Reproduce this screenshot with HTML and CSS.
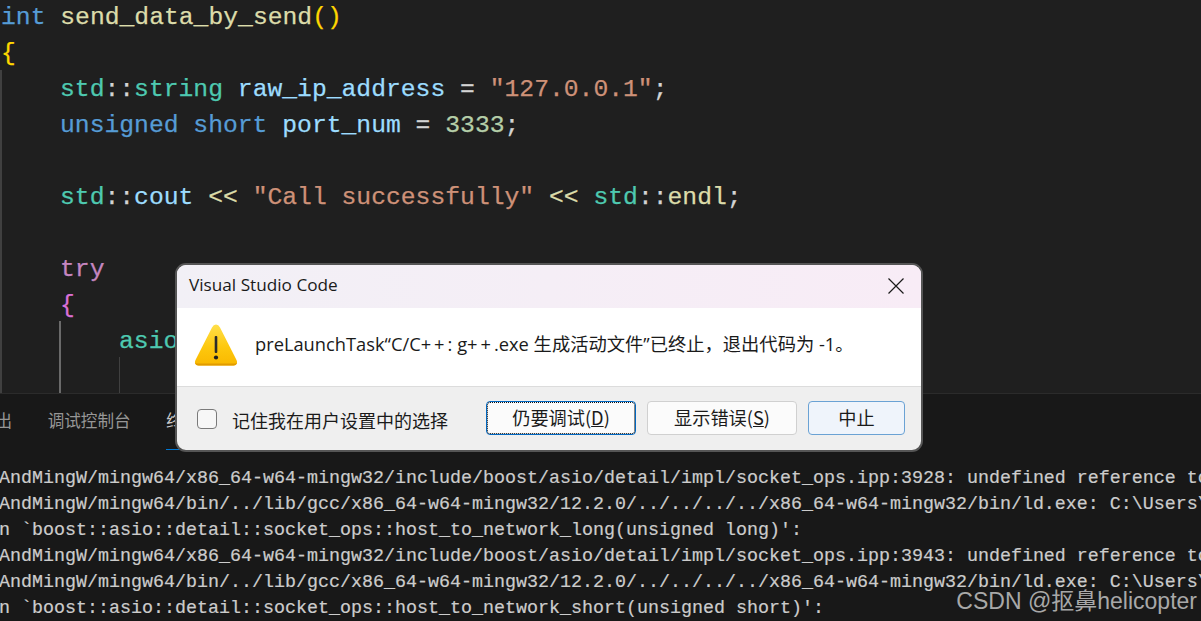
FILE: index.html
```html
<!DOCTYPE html>
<html lang="zh-CN">
<head>
<meta charset="utf-8">
<title>Visual Studio Code</title>
<link rel="stylesheet" href="styles.css">
</head>
<body>
<main class="window">
  <section class="editor">
    <div class="line"><span class="kw">int</span> <span class="fn">send_data_by_send</span><span class="br">()</span></div>
    <div class="line"><span class="br">{</span></div>
    <div class="line in1"><span class="ty">std</span><span class="pl">::</span><span class="ty">string</span> <span class="var">raw_ip_address</span> <span class="pl">=</span> <span class="str">"127.0.0.1"</span><span class="pl">;</span></div>
    <div class="line in1"><span class="kw">unsigned short</span> <span class="var">port_num</span> <span class="pl">=</span> <span class="num">3333</span><span class="pl">;</span></div>
    <div class="line"></div>
    <div class="line in1"><span class="ty">std</span><span class="pl">::</span><span class="var">cout</span> <span class="fn">&lt;&lt;</span> <span class="str">"Call successfully"</span> <span class="fn">&lt;&lt;</span> <span class="ty">std</span><span class="pl">::</span><span class="fn">endl</span><span class="pl">;</span></div>
    <div class="line"></div>
    <div class="line in1"><span class="ctl">try</span></div>
    <div class="line in1"><span class="br2">{</span></div>
    <div class="line in2"><span class="ty">asio</span></div>
    <span class="guide g1"></span>
    <span class="guide g2"></span>
    <span class="guide g3"></span>
  </section>
  <section class="panel">
    <nav class="tabs">
      <span class="tab">输出</span>
      <span class="tab">调试控制台</span>
      <span class="tab active">终端</span>
    </nav>
    <pre class="term">AndMingW/mingw64/x86_64-w64-mingw32/include/boost/asio/detail/impl/socket_ops.ipp:3928: undefined reference to
AndMingW/mingw64/bin/../lib/gcc/x86_64-w64-mingw32/12.2.0/../../../../x86_64-w64-mingw32/bin/ld.exe: C:\Users\
n `boost::asio::detail::socket_ops::host_to_network_long(unsigned long)':
AndMingW/mingw64/x86_64-w64-mingw32/include/boost/asio/detail/impl/socket_ops.ipp:3943: undefined reference to
AndMingW/mingw64/bin/../lib/gcc/x86_64-w64-mingw32/12.2.0/../../../../x86_64-w64-mingw32/bin/ld.exe: C:\Users\
n `boost::asio::detail::socket_ops::host_to_network_short(unsigned short)':</pre>
  </section>
</main>

<div class="dialog" role="dialog">
  <header class="titlebar">
    <span class="title">Visual Studio Code</span>
    <svg class="close" width="16" height="16" viewBox="0 0 16 16"><path d="M0.5 0.5L15.5 15.5M15.5 0.5L0.5 15.5" stroke="#1a1a1a" stroke-width="1.2" fill="none"/></svg>
  </header>
  <div class="body">
    <svg class="warn" width="44" height="44" viewBox="0 0 44 44">
      <defs><linearGradient id="wg" x1="0" y1="0" x2="0" y2="1"><stop offset="0" stop-color="#ffdf4a"/><stop offset="0.55" stop-color="#fdc80e"/><stop offset="1" stop-color="#f9b800"/></linearGradient></defs>
      <path d="M22 1.5 Q24.5 1.5 26 4.5 L42.5 37 Q44.5 42 39.5 42.5 L4.5 42.5 Q-0.5 42 1.5 37 L18 4.5 Q19.5 1.5 22 1.5Z" fill="url(#wg)"/>
      <path d="M1 40 Q2 42.5 4.5 42.5 L39.5 42.5 Q42 42.5 43 40 Q41 40.6 39 40.6 L5 40.6 Q3 40.6 1 40Z" fill="#e19b00"/>
      <rect x="20.7" y="13" width="2.6" height="17" rx="1" fill="#2b2b2b"/>
      <circle cx="22" cy="34.5" r="2.1" fill="#1f1f1f"/>
    </svg>
    <p class="msg">preLaunchTask“C/C<span class="wide">++</span>: g<span class="wide">++</span>.exe 生成活动文件”已终止，退出代码为 -1。</p>
  </div>
  <footer class="foot">
    <label class="remember"><span class="check"></span><span class="remember-text">记住我在用户设置中的选择</span></label>
    <div class="btns">
      <button class="btn focus">仍要调试(<u>D</u>)</button>
      <button class="btn">显示错误(<u>S</u>)</button>
      <button class="btn hot">中止</button>
    </div>
  </footer>
</div>

<div class="mark">CSDN @抠鼻helicopter</div>
</body>
</html>
```
FILE: styles.css
```css
* { box-sizing: border-box; }
html, body { margin: 0; height: 100%; overflow: hidden; background: #1e1e1e; }
.window { width: 1201px; height: 621px; display: flex; flex-direction: column; overflow: hidden; }
.editor { position: relative; flex: none; height: 393px; background: #1f1f1f; overflow: hidden;
  font-family: "Liberation Mono", monospace; font-size: 24.7px; -webkit-text-stroke: 0.25px; }
.line { height: 36px; line-height: 36px; white-space: pre; padding-left: 1px; }
.line:first-child { margin-top: -1px; }
.in1 { padding-left: 60px; }
.in2 { padding-left: 119px; }
.kw { color: #569cd6; }
.fn { color: #dcdcaa; }
.br { color: #ffd700; }
.br2 { color: #da70d6; }
.ty { color: #4ec9b0; }
.pl { color: #d4d4d4; }
.var { color: #9cdcfe; }
.str { color: #ce9178; }
.num { color: #b5cea8; }
.ctl { color: #c586c0; }
.guide { position: absolute; background: #404040; }
.g1 { left: 0; top: 70px; width: 2px; height: 323px; }
.g2 { left: 59px; top: 321px; width: 2px; height: 72px; background: #6a6a6a; }
.g3 { left: 119px; top: 357px; width: 1px; height: 36px; }
.panel { flex: 1; background: #181818; border-top: 1px solid #2b2b2b; display: flex; flex-direction: column; }
.tabs { flex: none; height: 57px; display: flex; gap: 35.5px; margin-left: -21px; padding-top: 14px; font-family: "Noto Sans CJK SC", sans-serif; font-size: 16.6px; color: #969696; }
.tab { height: 40px; white-space: nowrap; }
.tab.active { color: #c8c8c8; border-bottom: 1px solid #0078d4; height: 42px; }
.term { margin: 0 0 0 -1px; padding-top: 15px; font-family: "Liberation Mono", monospace; font-size: 18.33px; line-height: 26px; color: #cccccc; white-space: pre; -webkit-text-stroke: 0.2px; }
.dialog { position: absolute; left: 175px; top: 263px; width: 748px; height: 189px; border: 2px solid #555; border-radius: 11px; overflow: hidden; background: #efefef; display: flex; flex-direction: column;
  font-family: "Noto Sans CJK SC", sans-serif; color: #1a1a1a; }
.titlebar { flex: none; height: 43px; display: flex; align-items: center; justify-content: space-between; padding: 0 17px 0 12px; background: linear-gradient(90deg, #f2f0f6, #f8ecf6); font-family: "Open Sans", "Noto Sans CJK SC", sans-serif; font-size: 17.2px; }
.title { position: relative; top: -2px; }
.close { position: relative; top: -1px; }
.body { flex: none; height: 79px; background: #fff; border-bottom: 1px solid #dcdcdc; display: flex; align-items: center; gap: 17px; padding: 0 0 4px 17px; }
.warn { flex: none; }
.msg { margin: 0 0 5px; font-family: "Open Sans", "Noto Sans CJK SC", sans-serif; font-size: 18.3px; white-space: nowrap; }
.wide { letter-spacing: 3px; }
.foot { flex: 1; display: flex; align-items: center; justify-content: space-between; padding: 0 16px 0 20px; }
.remember { display: flex; align-items: center; gap: 15px; font-size: 18px; }
.remember-text { padding-top: 3px; }
.check { width: 20px; height: 20px; border: 1px solid #7a7a7a; border-radius: 4px; background: #f7f7f7; }
.btns { display: flex; gap: 11px; margin-bottom: 2px; }
.btn { width: 150px; height: 34px; padding: 0 0 1px; border: 1px solid #d0d0d0; border-radius: 4px; background: #fbfbfb; font-family: "Noto Sans CJK SC", sans-serif; font-size: 18.2px; line-height: 1; color: #1a1a1a; }
.btn.focus { border: 1px solid #0067c0; outline: 1px dotted #111; outline-offset: -2px; }
.btn.hot { width: 97px; border-color: #6aa2d4; background: #eff4fb; }
.mark { position: absolute; right: 4px; bottom: 6px; font-family: "Liberation Sans", "Noto Sans CJK SC", sans-serif; font-size: 23px; line-height: 28px; color: #a8a8a8; white-space: nowrap; }
```
